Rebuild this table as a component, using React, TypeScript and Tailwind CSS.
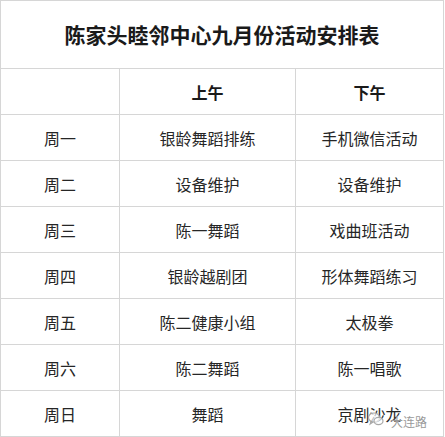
const rows: [string, string, string][] = [
  ['周一', '银龄舞蹈排练', '手机微信活动'],
  ['周二', '设备维护', '设备维护'],
  ['周三', '陈一舞蹈', '戏曲班活动'],
  ['周四', '银龄越剧团', '形体舞蹈练习'],
  ['周五', '陈二健康小组', '太极拳'],
  ['周六', '陈二舞蹈', '陈一唱歌'],
  ['周日', '舞蹈', '京剧沙龙'],
]

const cell = 'flex items-center justify-center border-r border-b border-[#d6d6d6]'

function Watermark() {
  return (
    <div className="absolute left-[367px] top-[410px] flex items-center gap-[6px] text-[#9a9a9a]">
      <svg width="18" height="16" viewBox="0 0 18 16" fill="none" stroke="#a8a8a8" strokeWidth="1.2">
        <ellipse cx="7" cy="6.5" rx="5.5" ry="4.5" fill="white" fillOpacity="0.7" />
        <path d="M4 10.5 L3.2 13 L6 11" />
        <ellipse cx="11.5" cy="10" rx="4.5" ry="3.6" fill="white" fillOpacity="0.7" />
      </svg>
      <span className="mt-[6px] text-[12px] leading-none [text-shadow:0_0_2px_white]">大连路</span>
    </div>
  )
}

export default function App() {
  return (
    <div className="relative w-[445px] h-[437px] bg-white font-['Noto_Sans_CJK_SC','Noto_Sans',sans-serif]">
      <div className="grid grid-cols-[119px_176px_148px] w-[444px] border-l border-t border-[#d6d6d6]">
        <div className={`${cell} col-span-3 h-[68px] text-[21px] font-bold text-[#1a1a1a]`}>
          陈家头睦邻中心九月份活动安排表
        </div>
        <div className={`${cell} h-[46px]`} />
        <div className={`${cell} h-[46px] text-[16px] font-bold text-[#1a1a1a]`}>上午</div>
        <div className={`${cell} h-[46px] text-[16px] font-bold text-[#1a1a1a]`}>下午</div>
        {rows.map(([day, am, pm]) => (
          <div key={day} className="contents">
            <div className={`${cell} h-[46px] text-[16px] text-[#262626]`}>{day}</div>
            <div className={`${cell} h-[46px] text-[16px] text-[#262626]`}>{am}</div>
            <div className={`${cell} h-[46px] text-[16px] text-[#262626]`}>{pm}</div>
          </div>
        ))}
      </div>
      <Watermark />
    </div>
  )
}
